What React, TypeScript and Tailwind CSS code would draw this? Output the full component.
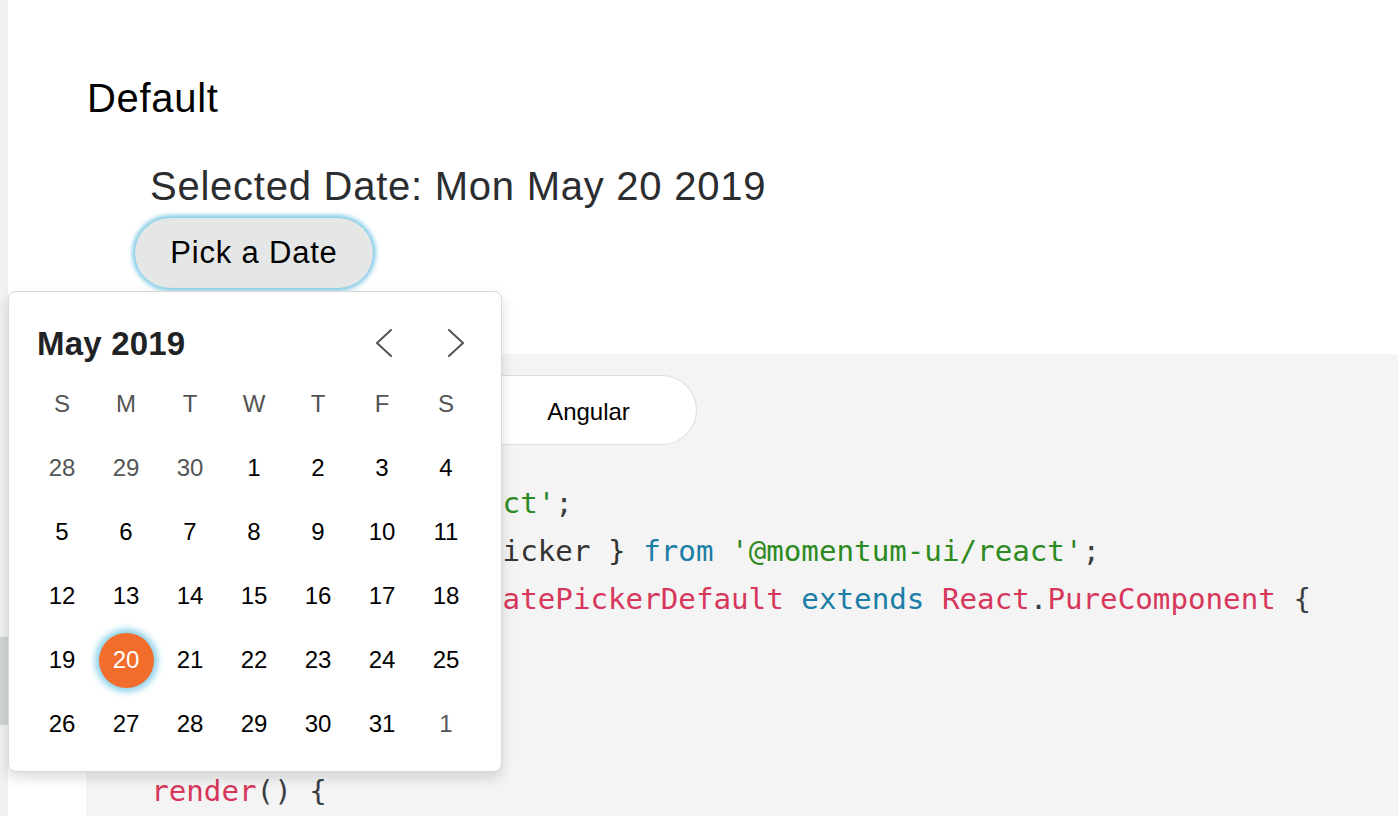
import React from 'react';

const weekdays = ['S', 'M', 'T', 'W', 'T', 'F', 'S'];

type Day = { n: number; muted?: boolean; selected?: boolean };

const range = (a: number, b: number) => Array.from({ length: b - a + 1 }, (_, i) => a + i);

const days: Day[] = [
  ...[28, 29, 30].map((n) => ({ n, muted: true })),
  ...range(1, 31).map((n) => ({ n, selected: n === 20 })),
  { n: 1, muted: true },
];

const kw = 'text-[#1b7ea6]';
const str = 'text-[#2d8a22]';
const fn = 'text-[#d6375a]';
const pun = 'text-[#3a3f44]';
const plain = 'text-[#333]';

const code: [string, string][][] = [
  [['import', kw], [' React ', plain], ['from', kw], [' ', plain], ["'react'", str], [';', pun]],
  [['import', kw], [' { Button, DatePicker } ', plain], ['from', kw], [' ', plain], ["'@momentum-ui/react'", str], [';', pun]],
  [
    ['export default class', kw],
    [' ', plain],
    ['DatePickerDefault', fn],
    [' ', plain],
    ['extends', kw],
    [' ', plain],
    ['React', fn],
    ['.', pun],
    ['PureComponent', fn],
    [' ', plain],
    ['{', pun],
  ],
  [['  state = {', plain]],
  [['    date: null', plain]],
  [['  };', plain]],
  [['  ', plain], ['render', fn], ['()', pun], [' ', plain], ['{', pun]],
];

function Chevron({ dir }: { dir: 'left' | 'right' }) {
  return (
    <svg width="18" height="28" viewBox="0 0 18 28" fill="none">
      <polyline
        points={dir === 'left' ? '16,1 2,14 16,27' : '2,1 16,14 2,27'}
        stroke="#545454"
        strokeWidth="2"
        strokeLinecap="round"
        strokeLinejoin="round"
      />
    </svg>
  );
}

function Calendar() {
  return (
    <div className="absolute left-0 top-[291px] z-10 w-[494px] h-[481px] bg-white border border-[#d9d9d9] rounded-lg shadow-[0_6px_14px_rgba(0,0,0,0.14)] pt-[22px]">
      <div className="h-[58px] flex items-center justify-between pl-[28px] pr-[25px]">
        <span className="text-[33px] font-bold text-[#1f2326] leading-none tracking-[0.2px]">May 2019</span>
        <div className="flex gap-[32px]">
          <button className="w-[40px] h-[40px] flex items-center justify-center">
            <Chevron dir="left" />
          </button>
          <button className="w-[40px] h-[40px] flex items-center justify-center">
            <Chevron dir="right" />
          </button>
        </div>
      </div>
      <div className="grid grid-cols-[repeat(7,64px)] ml-[21px]">
        {weekdays.map((d, i) => (
          <div key={i} className="h-[64px] flex items-center justify-center text-[24px] text-[#545454]">
            {d}
          </div>
        ))}
        {days.map((d, i) => (
          <div key={i} className="h-[64px] flex items-center justify-center">
            {d.selected ? (
              <span className="w-[55px] h-[55px] rounded-full bg-[#f26d2c] text-white text-[24px] flex items-center justify-center shadow-[0_0_6px_4px_rgba(90,190,225,0.7)]">
                {d.n}
              </span>
            ) : (
              <span className={`text-[24px] ${d.muted ? 'text-[#555]' : 'text-black'}`}>{d.n}</span>
            )}
          </div>
        ))}
      </div>
    </div>
  );
}

export default function App() {
  return (
    <div className="flex h-screen overflow-hidden bg-white font-['Liberation_Sans',Arial,sans-serif]">
      <div className="w-[8px] shrink-0 bg-[#f0f1f2] flex flex-col">
        <div className="h-[637px]" />
        <div className="h-[88px] bg-[#d2d5d6]" />
      </div>
      <main className="flex-1 relative">
        <h2 className="pl-[79px] pt-[78px] text-[40px] leading-none tracking-[0.7px] text-black">Default</h2>
        <p className="pl-[142px] mt-[48px] text-[40px] leading-none tracking-[0.75px] text-[#2b2d30]">
          Selected Date: Mon May 20 2019
        </p>
        <div className="pl-[127px] mt-[12px]">
          <button className="w-[238px] h-[70px] rounded-full bg-[#e5e7e7] text-[31px] tracking-[0.8px] text-black shadow-[0_0_4px_3px_rgba(100,190,225,0.8)]">
            Pick a Date
          </button>
        </div>
        <Calendar />
        <section className="ml-[78px] mt-[66px] bg-[#f4f4f4] h-[600px] pt-[21px]">
          <div className="flex ml-[179px]">
            <div className="w-[216px] h-[70px] pt-[3px] bg-white border border-[#dedede] rounded-l-full flex items-center justify-center text-[24px] text-black">
              React
            </div>
            <div className="w-[216px] h-[70px] pt-[3px] bg-white border border-l-0 border-[#dedede] rounded-r-full flex items-center justify-center text-[24px] text-black">
              Angular
            </div>
          </div>
          <pre className="mt-[34px] pl-[30px] font-['DejaVu_Sans_Mono',monospace] text-[29.2px] leading-[48px]">
            {code.map((line, i) => (
              <div key={i} className="h-[48px] whitespace-pre">
                {line.map(([t, c], j) => (
                  <span key={j} className={c}>
                    {t}
                  </span>
                ))}
              </div>
            ))}
          </pre>
        </section>
      </main>
    </div>
  );
}
